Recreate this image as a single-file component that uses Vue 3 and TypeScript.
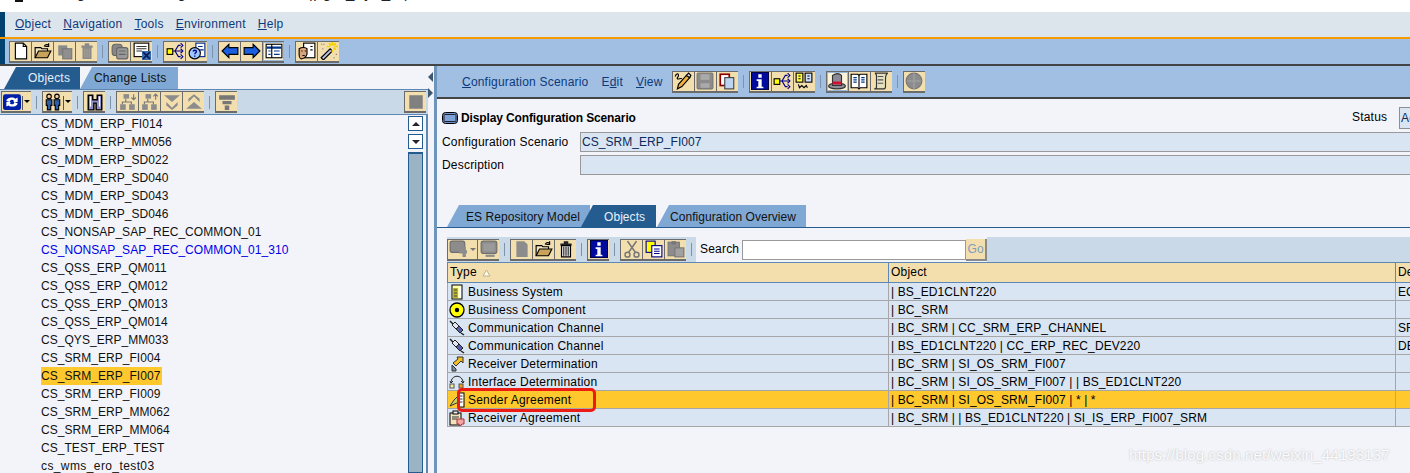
<script setup lang="ts">
type B = { i: string; on?: boolean; drop?: boolean }
type G = B[]
const ic = (...n: string[]): G => n.map((i) => ({ i }))
const mainBar: G[] = [
  ic('doc', 'open', 'copyd', 'trashd'),
  ic('objd', 'docx'),
  ic('tree', 'help'),
  [{ i: 'left' }, { i: 'right' }, { i: 'list', on: true }],
  ic('face', 'wand'),
]
const leftBar: G[] = [
  [{ i: 'refresh', drop: true }],
  [{ i: 'people', drop: true }],
  ic('binoc'),
  ic('treed', 'treeu', 'chevd', 'chevu'),
  ic('funnel'),
]
const rightBar: G[] = [
  ic('pen', 'saved', 'copyr'),
  ic('info', 'tree', 'kv'),
  [{ i: 'hat', on: true }, { i: 'book' }, { i: 'scroll' }],
  ic('globe'),
]
const tableBar: G[] = [
  [{ i: 'addd', drop: true }, { i: 'commd' }],
  ic('docd', 'open', 'trash'),
  ic('info'),
  ic('cut', 'copyy', 'pasted'),
]
const scenarios = [
  'CS_MDM_ERP_FI014', 'CS_MDM_ERP_MM056', 'CS_MDM_ERP_SD022', 'CS_MDM_ERP_SD040',
  'CS_MDM_ERP_SD043', 'CS_MDM_ERP_SD046', 'CS_NONSAP_SAP_REC_COMMON_01',
  'CS_NONSAP_SAP_REC_COMMON_01_310', 'CS_QSS_ERP_QM011', 'CS_QSS_ERP_QM012',
  'CS_QSS_ERP_QM013', 'CS_QSS_ERP_QM014', 'CS_QYS_ERP_MM033', 'CS_SRM_ERP_FI004',
  'CS_SRM_ERP_FI007', 'CS_SRM_ERP_FI009', 'CS_SRM_ERP_MM062', 'CS_SRM_ERP_MM064',
  'CS_TEST_ERP_TEST', 'cs_wms_ero_test03',
]
const rows = [
  { i: 'bsys', t: 'Business System', o: '| BS_ED1CLNT220', d: 'EC' },
  { i: 'comp', t: 'Business Component', o: '| BC_SRM', d: '' },
  { i: 'chan', t: 'Communication Channel', o: '| BC_SRM | CC_SRM_ERP_CHANNEL', d: 'SR' },
  { i: 'chan', t: 'Communication Channel', o: '| BS_ED1CLNT220 | CC_ERP_REC_DEV220', d: 'DE' },
  { i: 'rdet', t: 'Receiver Determination', o: '| BC_SRM | SI_OS_SRM_FI007', d: '' },
  { i: 'idet', t: 'Interface Determination', o: '| BC_SRM | SI_OS_SRM_FI007 | | BS_ED1CLNT220', d: '' },
  { i: 'sagr', t: 'Sender Agreement', o: '| BC_SRM | SI_OS_SRM_FI007 | * | *', d: '', sel: true },
  { i: 'ragr', t: 'Receiver Agreement', o: '| BC_SRM | | BS_ED1CLNT220 | SI_IS_ERP_FI007_SRM', d: '' },
]
</script>

<template>
  <div class="page">
    <svg class="defs" width="0" height="0">
      <defs>
        <symbol id="doc" viewBox="0 0 16 16"><path d="M3 1h7l3 3v11H3z" fill="#fff" stroke="#000"/><path d="M10 1v3h3" fill="none" stroke="#000"/></symbol>
        <symbol id="open" viewBox="0 0 16 16"><path d="M1 14V5h5l1 1h5v2" fill="#f5e6c0" stroke="#000"/><path d="M1 14l3-6h11l-3 6z" fill="#c9a35a" stroke="#000"/><path d="M9 4c1-2 3-2 4-1M13 1v3h-3" fill="none" stroke="#000"/></symbol>
        <symbol id="copyd" viewBox="0 0 16 16"><rect x="2" y="3" width="8" height="9" fill="#8a8a8a"/><rect x="6" y="6" width="8" height="9" fill="#8f8f8f" stroke="#777"/></symbol>
        <symbol id="trashd" viewBox="0 0 16 16"><path d="M3 3h10v2H3zM6 1h4v2H6zM4 5h8v10H4z" fill="#8a8a8a"/><path d="M6 6v8M8 6v8M10 6v8" stroke="#a9a294"/></symbol>
        <symbol id="objd" viewBox="0 0 16 16"><rect x="1" y="2" width="9" height="10" rx="3" fill="#888" stroke="#666"/><rect x="5" y="5" width="10" height="10" rx="2" fill="#999" stroke="#666"/><path d="M7 8h6M7 11h6" stroke="#666"/></symbol>
        <symbol id="docx" viewBox="0 0 16 16"><rect x="1" y="1" width="13" height="12" fill="#fff" stroke="#000"/><path d="M3 4h9M3 6h9M3 8h5" stroke="#333"/><rect x="8" y="8" width="8" height="8" fill="#3a6ea5"/><path d="M9 9l6 6M15 9l-6 6" stroke="#001a66" stroke-width="1.4"/></symbol>
        <symbol id="tree" viewBox="0 0 16 16"><rect x="1" y="6" width="5" height="5" fill="#ff0" stroke="#000"/><path d="M6 8h8M8 8l3-5h2M8 8l3 5h2" fill="none" stroke="#00008b"/><path d="M13 1l2 2-2 2M13 11l2 2-2 2M13 6l2 2-2 2" fill="none" stroke="#00008b"/></symbol>
        <symbol id="help" viewBox="0 0 16 16"><rect x="7" y="1" width="8" height="12" fill="#fff" stroke="#002a8c"/><path d="M9 4h4M10 7h4" stroke="#002a8c"/><circle cx="6" cy="10" r="5" fill="#9ec7ff" stroke="#000"/><path d="M4.500 8.500c.5-1.500 3-1.500 3 0 0 1.200-1.500 1-1.500 2.300M6 12v1" fill="none" stroke="#00008b" stroke-width="1.200"/></symbol>
        <symbol id="left" viewBox="0 0 16 16"><path d="M1 8l6-6v3h8v6H7v3z" fill="#1b5ee0" stroke="#000"/></symbol>
        <symbol id="right" viewBox="0 0 16 16"><path d="M15 8l-6-6v3H1v6h8v3z" fill="#1b5ee0" stroke="#000"/></symbol>
        <symbol id="list" viewBox="0 0 16 16"><rect x="1" y="2" width="14" height="12" fill="#fff" stroke="#000"/><path d="M1.500 5h13" stroke="#00378a" stroke-width="2"/><path d="M6 2v12" stroke="#000"/><path d="M3 8h2M3 11h2M8 8h5M8 11h5" stroke="#00378a"/></symbol>
        <symbol id="face" viewBox="0 0 16 16"><rect x="5" y="1" width="10" height="13" fill="#fff" stroke="#000"/><path d="M11 4h2M11 7h2" stroke="#000"/><path d="M1 6c3-2 6-1 7 0v5c-1 3-4 4-5 4s-2-2-2-4z" fill="#d9a57a" stroke="#000"/><path d="M3 8h1M6 8h1M4 12h2" stroke="#000"/></symbol>
        <symbol id="wand" viewBox="0 0 16 16"><path d="M1 14l8-8 2 2-8 8z" fill="#b9c4e0" stroke="#000"/><path d="M11 0v3M11 7v2M6 4h3M13 4h3M8 1l2 2M14 1l-2 2M14 7l-2-2" stroke="#f2d100" stroke-width="1.500"/><path d="M1 2h3M2 6h2M14 11h2M12 14h2" stroke="#7a7a7a" stroke-dasharray="1 1"/></symbol>
        <symbol id="refresh" viewBox="0 0 16 16"><rect x="0" y="1" width="16" height="14" rx="2" fill="#001fa8"/><path d="M3 7c0-3 6-4 8-2l2-1v4H9l1-1C8 5 6 6 6 8zM13 9c0 3-6 4-8 2l-2 1V8h4l-1 1c2 2 4 1 4-1z" fill="#fff"/></symbol>
        <symbol id="people" viewBox="0 0 16 16"><g fill="#2e5ea8" stroke="#000"><circle cx="4.500" cy="3" r="2" fill="#f5c9a0"/><circle cx="11.500" cy="3" r="2" fill="#f5c9a0"/><path d="M2 6h5v5H6v4H3v-4H2zM9 6h5v5h-1v4h-3v-4H9z"/></g></symbol>
        <symbol id="binoc" viewBox="0 0 16 16"><path d="M2 2h4v4h4V2h4v13H9V9H7v6H2z" fill="#8f8dc8" stroke="#000" stroke-width="1.300"/><path d="M4 3v9M12 3v9" stroke="#fff"/></symbol>
        <symbol id="treed" viewBox="0 0 16 16"><g fill="#8c8c8c"><rect x="4" y="1" width="5" height="4"/><rect x="1" y="10" width="5" height="5"/><rect x="9" y="10" width="5" height="5"/></g><path d="M6 5v3M3 10V8h8v2" fill="none" stroke="#777"/><path d="M13 1v5M11 4l2 2 2-2" fill="none" stroke="#777"/></symbol>
        <symbol id="treeu" viewBox="0 0 16 16"><g fill="#8c8c8c"><rect x="4" y="1" width="5" height="4"/><rect x="1" y="10" width="5" height="5"/><rect x="9" y="10" width="5" height="5"/></g><path d="M6 5v3M3 10V8h8v2" fill="none" stroke="#777"/><path d="M13 6V1M11 3l2-2 2 2" fill="none" stroke="#777"/></symbol>
        <symbol id="chevd" viewBox="0 0 16 16"><path d="M1 2h14l-7 6z" fill="#8c8c8c"/><path d="M3 8l5 5 5-5v3l-5 4-5-4z" fill="#8c8c8c"/></symbol>
        <symbol id="chevu" viewBox="0 0 16 16"><path d="M1 14h14l-7-6z" fill="#8c8c8c"/><path d="M3 8l5-5 5 5V5L8 1 3 5z" fill="#8c8c8c"/></symbol>
        <symbol id="funnel" viewBox="0 0 16 16"><path d="M1 2h14v4H1zM4 7h8v3H4zM6 11h4v4H6z" fill="#777"/></symbol>
        <symbol id="stop" viewBox="0 0 16 16"><rect x="2" y="2" width="12" height="12" fill="#808080"/></symbol>
        <symbol id="pen" viewBox="0 0 16 16"><path d="M1 4c1-3 3-3 3-1s-2 2-1 3 3-1 4 0" fill="none" stroke="#000"/><path d="M3 15l1-4 7-8 3 2-7 8z" fill="#f0b040" stroke="#000"/><path d="M11 3l2-2 2 2-1 2z" fill="#d0d0d0" stroke="#000"/></symbol>
        <symbol id="saved" viewBox="0 0 16 16"><rect x="1" y="1" width="14" height="14" rx="1" fill="#8c8c8c" stroke="#777"/><rect x="4" y="2" width="8" height="5" fill="#aaa"/><rect x="4" y="10" width="8" height="4" fill="#aaa"/></symbol>
        <symbol id="copyr" viewBox="0 0 16 16"><rect x="2" y="2" width="8" height="10" fill="#fff" stroke="#8b0000" stroke-width="1.500"/><rect x="6" y="5" width="8" height="10" fill="#bcd4f0" stroke="#444"/></symbol>
        <symbol id="info" viewBox="0 0 16 16"><rect x="0" y="0" width="16" height="16" fill="#000a9c" stroke="#000"/><path d="M6.500 2h3v3h-3zM5 6.500h4.500V13H11v1.500H5V13h1.500V8H5z" fill="#fff"/></symbol>
        <symbol id="kv" viewBox="0 0 16 16"><rect x="1" y="1" width="6" height="8" fill="#ffff40" stroke="#000"/><rect x="9" y="1" width="6" height="8" fill="#cfe0ff" stroke="#000"/><path d="M3 3.500h2M3 6h2M11 3.500h2M11 6h2" stroke="#000"/><path d="M3 11l1 3 2-2 2 2 2-2 1 2" fill="none" stroke="#000"/></symbol>
        <symbol id="hat" viewBox="0 0 16 16"><ellipse cx="8" cy="12.500" rx="7.500" ry="2.500" fill="#8f8f99" stroke="#333"/><path d="M4 3c3-2 6-2 8 0v9H4z" fill="#8a8a96" stroke="#333"/><path d="M4 8.500h8v2.500H4z" fill="#d01030"/></symbol>
        <symbol id="book" viewBox="0 0 16 16"><path d="M1 2h6l1 1 1-1h6v12H9l-1 1-1-1H1z" fill="#fff" stroke="#000"/><path d="M8 3v11" stroke="#000"/><path d="M3 5h3M3 7h3M3 9h3M10 5h3M10 7h3M10 9h3" stroke="#00378a"/></symbol>
        <symbol id="scroll" viewBox="0 0 16 16"><path d="M3 1h11c-2 1-2 3-2 5v7c0 1.500-1 2-2 2H2c1 0 2-1 2-2V3c0-1-1-1-1-2z" fill="#e5e0c0" stroke="#333"/><path d="M5 4h5M5 7h5M5 10h5" stroke="#555"/></symbol>
        <symbol id="globe" viewBox="0 0 16 16"><circle cx="8" cy="8" r="7" fill="#8c8c8c" stroke="#777"/><path d="M2 8h12M8 1v14" stroke="#a5a5a5"/></symbol>
        <symbol id="addd" viewBox="0 0 16 16"><rect x="1" y="1" width="13" height="10" rx="2" fill="#8c8c8c" stroke="#6e6e6e"/><path d="M9 9h3V6h3v3h1v3h-1v3h-3v-3H9z" fill="#8c8c8c"/></symbol>
        <symbol id="commd" viewBox="0 0 16 16"><rect x="1" y="1" width="14" height="11" rx="2" fill="#8c8c8c" stroke="#6e6e6e"/><rect x="3" y="3" width="10" height="7" fill="#9a9a9a"/><path d="M5 13h8v2H5z" fill="#8c8c8c"/></symbol>
        <symbol id="docd" viewBox="0 0 16 16"><path d="M3 1h7l3 3v11H3z" fill="#8c8c8c"/></symbol>
        <symbol id="trash" viewBox="0 0 16 16"><path d="M3 3h10v2H3zM6 1h4v2H6z" fill="#222"/><path d="M4 5h8v10H4z" fill="#ddd" stroke="#000"/><path d="M6 6v8M8 6v8M10 6v8" stroke="#333"/></symbol>
        <symbol id="cut" viewBox="0 0 16 16"><path d="M4 1l7 10M12 1L5 11" stroke="#777" stroke-width="1.500"/><circle cx="4" cy="13" r="2.200" fill="none" stroke="#777" stroke-width="1.300"/><circle cx="12" cy="13" r="2.200" fill="none" stroke="#777" stroke-width="1.300"/></symbol>
        <symbol id="copyy" viewBox="0 0 16 16"><rect x="1" y="1" width="8" height="10" fill="#ff0" stroke="#00008b"/><rect x="6" y="5" width="9" height="10" fill="#fff" stroke="#00008b"/><path d="M8 8h5M8 10h5M8 12h5" stroke="#00008b"/></symbol>
        <symbol id="pasted" viewBox="0 0 16 16"><rect x="1" y="2" width="10" height="12" fill="#8c8c8c" stroke="#777"/><rect x="4" y="1" width="4" height="3" fill="#777"/><rect x="7" y="7" width="8" height="8" fill="#a0a0a0" stroke="#777"/></symbol>
        <symbol id="bsys" viewBox="0 0 16 16"><rect x="3" y="1" width="10" height="14" fill="#ffffb0" stroke="#000"/><rect x="4" y="4" width="5" height="10" fill="#b8b820"/><rect x="10" y="3" width="2" height="11" fill="#fff"/><path d="M5 6h3M5 9h3M5 12h3" stroke="#444"/></symbol>
        <symbol id="comp" viewBox="0 0 16 16"><circle cx="8" cy="8" r="7" fill="#ff0" stroke="#000" stroke-width="1.300"/><circle cx="8" cy="8" r="2.200" fill="#000"/></symbol>
        <symbol id="chan" viewBox="0 0 16 16"><path d="M1 1l3 3" stroke="#222" stroke-width="1.500"/><path d="M3 5l3-3 4 4-3 3z" fill="#e4e8f2" stroke="#222"/><path d="M7 9l3-3 4 4-3 3z" fill="#5660a8" stroke="#222"/><path d="M12 13l3 2" fill="none" stroke="#222" stroke-width="1.500"/></symbol>
        <symbol id="rdet" viewBox="0 0 16 16"><path d="M8 1h6v6l-2-2-5 5-3-3 5-4z" fill="#f0c020" stroke="#333"/><path d="M3 9l4 4v2H3z" fill="#7d8aa5" stroke="#333"/></symbol>
        <symbol id="idet" viewBox="0 0 16 16"><path d="M2 9c0-9 12-9 12 0M2 9l-1-2M2 9l2-2M14 9l-2-2M14 9l1-2" fill="none" stroke="#222"/><rect x="1" y="10" width="4" height="4" fill="#f5f0a0" stroke="#555"/><rect x="10" y="10" width="4" height="4" fill="#f0a020" stroke="#555"/></symbol>
        <symbol id="sagr" viewBox="0 0 16 16"><path d="M1 14l4-6 3-3 2 5z" fill="#c8d060" stroke="#333"/><rect x="9" y="1" width="6" height="14" fill="#fff" stroke="#000"/><path d="M10.500 4h3M10.500 7h3M10.500 10h3" stroke="#333"/></symbol>
        <symbol id="ragr" viewBox="0 0 16 16"><rect x="1" y="3" width="11" height="12" fill="#f3e4c0" stroke="#000"/><rect x="4" y="1" width="5" height="3" fill="#eee" stroke="#000"/><path d="M3 7h7M3 9h5" stroke="#333"/><path d="M8 9h7v5h-2l-2 2-1-2H8z" fill="#f4a5a5" stroke="#a33"/></symbol>
      </defs>
    </svg>

    <div class="title"><span class="title-box"></span><span class="title-text">Integration Configuration Builder (pgm_sys_cl)</span></div>

    <nav class="menu">
      <span class="m"><u>O</u>bject</span>
      <span class="m"><u>N</u>avigation</span>
      <span class="m"><u>T</u>ools</span>
      <span class="m"><u>E</u>nvironment</span>
      <span class="m"><u>H</u>elp</span>
    </nav>

    <div class="bar main-bar">
      <template v-for="(g, gi) in mainBar" :key="gi">
        <span v-if="gi" class="sep"></span>
        <div class="grp">
          <div v-for="b in g" :key="b.i" class="btn" :class="{ on: b.on, drop: b.drop }"><svg class="ico"><use :href="'#' + b.i" /></svg></div>
        </div>
      </template>
    </div>

    <div class="body">
      <aside class="left">
        <div class="tabs left-tabs">
          <div class="tab active t-obj">Objects</div>
          <div class="tab t-chg">Change Lists</div>
        </div>
        <div class="bar tool-bar left-tool">
          <template v-for="(g, gi) in leftBar" :key="gi">
            <span v-if="gi" class="sep"></span>
            <div class="grp">
              <div v-for="b in g" :key="b.i" class="btn" :class="{ on: b.on, drop: b.drop }"><svg class="ico"><use :href="'#' + b.i" /></svg><span v-if="b.drop" class="caret"></span></div>
            </div>
          </template>
          <div class="grp end"><div class="btn"><svg class="ico"><use href="#stop" /></svg></div></div>
        </div>
        <div class="tree-wrap">
          <ul class="tree-list">
            <li v-for="s in scenarios" :key="s" class="node" :class="{ lower: s.startsWith('cs_') }">
              <span :class="{ blue: s.endsWith('_310'), picked: s === 'CS_SRM_ERP_FI007' }">{{ s }}</span>
            </li>
          </ul>
          <div class="scroll">
            <div class="sb"><span class="up"></span></div>
            <div class="sb"><span class="dn"></span></div>
            <div class="thumb"></div>
          </div>
        </div>
      </aside>

      <div class="splitter"><span class="arr-l"></span><span class="arr-r"></span></div>

      <main class="right">
        <header class="right-head">
          <span class="m2"><u>C</u>onfiguration Scenario</span>
          <span class="m2">E<u>d</u>it</span>
          <span class="m2"><u>V</u>iew</span>
          <div class="bar right-tools">
            <template v-for="(g, gi) in rightBar" :key="gi">
              <span v-if="gi" class="sep"></span>
              <div class="grp">
                <div v-for="b in g" :key="b.i" class="btn" :class="{ on: b.on }"><svg class="ico"><use :href="'#' + b.i" /></svg></div>
              </div>
            </template>
          </div>
        </header>

        <section class="form">
          <div class="form-title">
            <svg class="display-ico" viewBox="0 0 16 12"><rect x="0.500" y="0.500" width="15" height="11" rx="3" fill="#6f93c8" stroke="#000"/><rect x="2" y="2.500" width="12" height="7" rx="1" fill="#7fa2d6" stroke="#223"/></svg>
            <b>Display Configuration Scenario</b>
            <span class="status">Status</span>
            <span class="status-val">Active</span>
          </div>
          <div class="frow"><label>Configuration Scenario</label><div class="field upper">CS_SRM_ERP_FI007</div></div>
          <div class="frow"><label>Description</label><div class="field"></div></div>
        </section>

        <div class="tabs right-tabs">
          <div class="tab t-es">ES Repository Model</div>
          <div class="tab active t-ob2">Objects</div>
          <div class="tab t-cfg">Configuration Overview</div>
        </div>

        <div class="table-area">
          <div class="bar tool-bar table-tool">
            <template v-for="(g, gi) in tableBar" :key="gi">
              <span v-if="gi" class="sep"></span>
              <div class="grp">
                <div v-for="b in g" :key="b.i" class="btn" :class="{ drop: b.drop }"><svg class="ico"><use :href="'#' + b.i" /></svg><span v-if="b.drop" class="caret grey"></span></div>
              </div>
            </template>
            <span class="sep"></span>
            <div class="search">
              <span class="search-label">Search</span>
              <div class="search-input"></div>
              <div class="go">Go</div>
            </div>
          </div>

          <div class="thead">
            <div class="c1">Type <svg class="sort" viewBox="0 0 9 8"><path d="M4.500 1L8 7H1z" fill="#fffbe9" stroke="#bdb38c"/></svg></div>
            <div class="c2">Object</div>
            <div class="c3">De</div>
          </div>
          <div v-for="r in rows" :key="r.t + r.o" class="trow" :class="{ sel: r.sel }">
            <div class="c1"><svg class="row-ico"><use :href="'#' + r.i" /></svg><span>{{ r.t }}</span></div>
            <div class="c2">{{ r.o }}</div>
            <div class="c3">{{ r.d }}</div>
          </div>
        </div>
      </main>
    </div>

    <div class="callout"></div>
    <div class="watermark">https://blog.csdn.net/weixin_44193137</div>
  </div>
</template>

<style>
html, body { margin: 0; background: #fff; overflow: hidden; }
</style>

<style scoped>
.page {
  position: relative;
  width: 1410px;
  height: 473px;
  overflow: hidden;
  font-family: "Liberation Sans", Arial, sans-serif;
  font-size: 12px;
  letter-spacing: 0.2px;
  color: #000;
  background: #f3f4f9;
  display: flex;
  flex-direction: column;
}
.defs { position: absolute; }
.title { height: 12px; background: #fff; overflow: hidden; flex: none; display: flex; align-items: flex-start; }
.title-box { width: 8px; height: 2px; margin-left: 15px; background: #111; flex: none; }
.title-text { display: block; margin: -16px 0 0 24px; font-size: 15px; letter-spacing: 1.2px; line-height: 18px; color: #222; white-space: nowrap; }
.menu {
  flex: none;
  height: 25px;
  box-sizing: border-box;
  background: #dde5ec;
  border-left: 5px solid #014271;
  display: flex;
  align-items: center;
  padding: 0 0 1px 10px;
  gap: 12px;
  color: #0c3a7c;
  letter-spacing: 0.25px;
}
.bar { display: flex; align-items: center; }
.main-bar {
  flex: none;
  box-sizing: border-box;
  height: 29px;
  border-top: 2px solid #f79a00;
  border-bottom: 2px solid #444;
  background: #a0bfe2;
  box-shadow: inset 5px 0 0 #014271;
  padding-left: 9px;
}
.grp { display: flex; gap: 1px; padding: 1px 0 2px 1px; background: #6b6b6b; flex: none; }
.btn {
  width: 21px;
  height: 19px;
  background: #f3dfae;
  display: flex;
  align-items: center;
  justify-content: center;
  box-sizing: border-box;
  position: relative;
}
.btn.on { background: #fdf3d9; outline: 1px solid #9ab8d8; outline-offset: -1px; }
.btn.drop { width: 29px; justify-content: flex-start; padding-left: 1px; }
.ico { width: 18px; height: 18px; display: block; flex: none; }
.caret { position: absolute; right: 1px; top: 8px; width: 0; height: 0; border: 3px solid transparent; border-top: 3px solid #000; border-bottom: 0; }
.caret::before { content: ""; position: absolute; left: -5px; top: -7px; width: 1px; height: 14px; background: #555; }
.caret.grey { border-top-color: #777; }
.caret.grey::before { display: none; }
.sep { width: 11px; height: 13px; flex: none; background: linear-gradient(#7d93aa, #7d93aa) center / 1px 100% no-repeat; }
.body { flex: 1; display: flex; min-height: 0; background: #f3f4f9; }
.left { width: 428px; flex: none; display: flex; flex-direction: column; min-height: 0; }
.tabs { display: flex; flex: none; }
.left-tabs { padding: 1px 0 0 4px; box-sizing: border-box; height: 23px; }
.tab {
  height: 22px;
  display: flex;
  align-items: center;
  box-sizing: border-box;
  background: #7fa8d4;
  color: #111;
  white-space: nowrap;
  clip-path: polygon(12px 0, 100% 0, 100% 100%, 0 100%);
}
.tab.active { background: #245c90; color: #e8f0fa; }
.t-obj { width: 76px; padding-left: 24px; }
.t-chg { width: 98px; padding-left: 14px; }
.tool-bar {
  background: #c9d9e8;
  border-top: 1px solid #5d88b3;
  border-bottom: 1px solid #5d88b3;
  flex: none;
  box-sizing: border-box;
}
.left-tool { height: 26px; padding-left: 1px; }
.end { margin-left: auto; margin-right: 2px; }
.tree-wrap { flex: 1; position: relative; min-height: 0; overflow: hidden; border-right: 2px solid #5d88b3; }
.tree-list { list-style: none; margin: 0; padding: 0; }
.node { height: 18px; line-height: 18px; padding-left: 41px; white-space: nowrap; color: #111; letter-spacing: 0.04px; }
.node.lower { letter-spacing: 0.4px; }
.node .picked { background: #ffc92e; display: inline-block; padding-right: 2px; }
.node .blue { color: #0000e6; }
.scroll { position: absolute; right: 3px; top: 1px; bottom: 0; width: 15px; display: flex; flex-direction: column; gap: 3px; }
.sb { height: 15px; flex: none; box-sizing: border-box; border: 1px solid #245c90; background: #fff; display: flex; align-items: center; justify-content: center; }
.up { border: 4px solid transparent; border-top: 0; border-bottom: 4px solid #223; }
.dn { border: 4px solid transparent; border-bottom: 0; border-top: 4px solid #223; }
.thumb { flex: 1; background: #9ab4c6; box-sizing: border-box; border: 1px solid #245c90; border-top-width: 2px; }
.splitter { width: 6px; flex: none; background: #f3f4f9; display: flex; flex-direction: column; align-items: flex-start; padding-top: 6px; gap: 6px; border-right: 3px solid #6d94bb; box-sizing: content-box; }
.arr-l { border: 5px solid transparent; border-left: 0; border-right: 5px solid #40586f; }
.arr-r { border: 5px solid transparent; border-right: 0; border-left: 5px solid #40586f; }
.right { flex: 1; min-width: 0; display: flex; flex-direction: column; overflow: hidden; }
.right-head {
  flex: none;
  height: 33px;
  box-sizing: border-box;
  background: #a0bfe2;
  border-bottom: 2px solid #444;
  display: flex;
  align-items: center;
  padding-left: 25px;
  color: #0c3a7c;
}
.m2 { margin-right: 13px; white-space: nowrap; }
.right-tools { margin-left: -4px; }
.form { flex: none; height: 106px; position: relative; padding: 8px 0 0 5px; box-sizing: border-box; }
.form-title { display: flex; align-items: center; height: 22px; }
.display-ico { width: 16px; height: 12px; margin-right: 3px; flex: none; }
.form-title b { letter-spacing: -0.13px; }
.status { position: absolute; left: 915px; top: 11px; }
.status-val { position: absolute; left: 962px; top: 8px; width: 60px; height: 22px; line-height: 20px; box-sizing: border-box; border: 1px solid #8f8f8f; border-right: 0; background: #d9e5f3; padding-left: 1px; color: #0c2a5c; }
.frow { display: flex; align-items: center; height: 20px; margin-top: 3px; }
.frow label { width: 138px; flex: none; }
.field { flex: 1; height: 20px; line-height: 18px; box-sizing: border-box; border: 1px solid #999; border-right: 0; background: #d9e5f3; padding-left: 1px; color: #0c2a5c; }
.field.upper { letter-spacing: 0.05px; }
.right-tabs { padding-left: 10px; border-bottom: 1px solid #245c90; box-sizing: content-box; height: 22px; letter-spacing: 0.06px; }
.right-tabs .tab { padding-top: 1px; }
.t-es { width: 143px; padding-left: 19px; }
.t-ob2 { width: 75px; padding-left: 23px; margin-left: -9px; }
.t-cfg { width: 149px; padding-left: 13px; margin-left: 1px; }
.table-area { padding: 9px 0 0 10px; flex: 1; min-height: 0; }
.table-tool { height: 25px; border-top: 0; border-bottom: 0; padding-left: 0; }
.search { align-self: stretch; display: flex; align-items: center; background: #f3f4f9; padding-left: 4px; margin-left: -1px; height: 25px; }
.search-label { padding-bottom: 2px; }
.search-input { width: 224px; height: 20px; margin-left: 3px; background: #fff; box-sizing: border-box; border: 1px solid #999; }
.go { width: 21px; height: 22px; background: #f3dfae; color: #7d9cc0; box-sizing: border-box; border: 1px solid #8a8a8a; border-width: 0 2px 2px 0; display: flex; align-items: center; justify-content: center; }
.table-tool::after { content: ""; flex: 1; align-self: stretch; }
.thead, .trow { display: grid; grid-template-columns: 441px 507px 60px; }
.thead { height: 21px; background: #f3dfae; line-height: 19px; box-sizing: border-box; border-top: 1px solid #5d88b3; border-bottom: 1px solid #5d88b3; border-left: 1px solid #5d88b3; }
.thead .c1 { padding-left: 2px; border-right: 1px solid #5d88b3; display: flex; align-items: center; gap: 5px; }
.thead .c2 { padding-left: 2px; border-right: 1px solid #5d88b3; }
.thead .c3 { padding-left: 2px; }
.sort { width: 9px; height: 8px; }
.trow { height: 18px; line-height: 18px; background: #d9e5f3; box-sizing: border-box; border-bottom: 1px solid #a6a6a6; border-left: 1px solid #a6a6a6; }
.trow.sel { background: #ffc92e; }
.trow .c1 { display: flex; align-items: flex-start; border-right: 1px solid #a6a6a6; padding-left: 1px; }
.trow .c2 { border-right: 1px solid #a6a6a6; padding-left: 2px; letter-spacing: 0.1px; }
.trow .c3 { padding-left: 2px; letter-spacing: 0.1px; }
.row-ico { width: 16px; height: 16px; margin: 1px 3px 0 0; flex: none; }
.callout { position: absolute; left: 457px; top: 388px; width: 139px; height: 24px; box-sizing: border-box; border: 3px solid #ee1a14; border-radius: 5px; }
.watermark { position: absolute; left: 1129px; top: 446px; font-size: 15px; letter-spacing: 0.15px; color: #fbfbfd; text-shadow: 0 0 2px #b5b5b5; white-space: nowrap; }
.menu .m { white-space: nowrap; }
</style>
